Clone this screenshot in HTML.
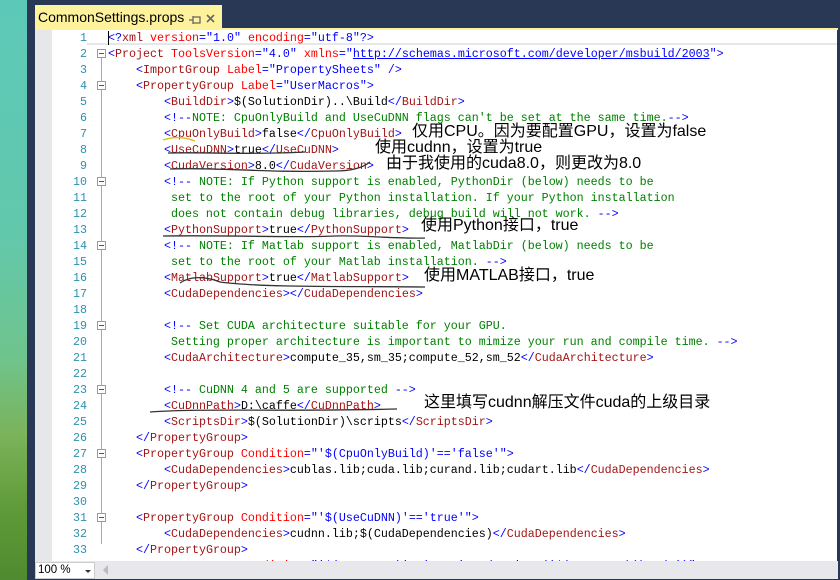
<!DOCTYPE html>
<html><head><meta charset="utf-8">
<style>
*{margin:0;padding:0;box-sizing:border-box}
body{width:840px;height:580px;overflow:hidden;background:#293955;position:relative;font-family:"Liberation Sans","Noto Sans CJK SC",sans-serif}
#desk{position:absolute;left:0;top:0;width:27px;height:580px;background:linear-gradient(180deg,#5cc9b8 0%,#62c8ac 40%,#6fc48c 62%,#7ab35a 75%,#5f9a38 88%,#4f8a30 100%)}
#tab{position:absolute;left:35px;top:5px;width:187px;height:24px;background:#fff29d;font-size:14px;color:#000;padding:4px 0 0 3px}
#tab svg{position:absolute;left:0;top:0}
#ybar{position:absolute;left:35px;top:28px;width:803px;height:2px;background:#fff29d}
#ed{position:absolute;left:35px;top:30px;width:802px;height:531px;background:#fff;overflow:hidden}
#gut{position:absolute;left:0;top:0;width:17px;height:100%;background:#e6e7e8}
.ln{position:absolute;left:17px;width:35px;text-align:right;color:#2b91af;font-family:"Liberation Mono",monospace;font-size:11.67px;line-height:16px;height:16px}
.cd{position:absolute;left:73px;white-space:pre;font-family:"Liberation Mono",monospace;font-size:11.67px;line-height:16px;height:16px;color:#000}
.b{color:#0000ff}.m{color:#a31515}.r{color:#ff0000}.g{color:#008000}.u{text-decoration:underline;color:#0000ff}
.fb{position:absolute;left:62px;width:9px;height:9px;border:1px solid #999;background:#fff}
.fb:after{content:"";position:absolute;left:1px;top:3px;width:5px;height:1px;background:#555}
.vl{position:absolute;left:66px;width:1px;background:#aaa}
.ann{position:absolute;font-size:16px;line-height:20px;color:#000;white-space:nowrap;font-family:"Liberation Sans","Noto Sans CJK SC",sans-serif}
#bot{position:absolute;left:35px;top:561px;width:803px;height:18px;background:#e8e8ec}
#zoom{position:absolute;left:0;top:1px;width:60px;height:17px;background:#fff;border:1px solid #ccc;font-size:11.5px;padding:1px 0 0 2px}
#zoom:after{content:"";position:absolute;right:3px;top:7px;border:3px solid transparent;border-top:3px solid #333}
#larr{position:absolute;left:68px;top:4px;border:5px solid transparent;border-right:5px solid #bbb;border-left:0}
#cur{position:absolute;left:73px;top:1px;width:1px;height:14px;background:#000}
#hl{position:absolute;left:52px;top:0;width:750px;height:15px;border-bottom:2px solid #e6e7e8}
</style></head><body>
<div id="desk"></div>
<div id="tab">CommonSettings.props<svg width="187" height="24" fill="none" stroke="#666" stroke-width="1.3"><path d="M154 15h4M158 11v8M158 12h7v6h-7"/><path d="M172 10l7 7M179 10l-7 7" stroke-width="1.6"/></svg></div>
<div id="ybar"></div>
<div id="ed">
<div id="gut"></div>
<div id="hl"></div>
<div id="cur"></div>
<div class="vl" style="top:24px;height:490px"></div>
<div class="fb" style="top:19px"></div>
<div class="fb" style="top:51px"></div>
<div class="fb" style="top:147px"></div>
<div class="fb" style="top:211px"></div>
<div class="fb" style="top:291px"></div>
<div class="fb" style="top:355px"></div>
<div class="fb" style="top:419px"></div>
<div class="fb" style="top:483px"></div>

<div class="ln" style="top:0">1</div><div class="cd" style="top:0"><span class="b">&lt;?</span><span class="m">xml</span> <span class="r">version</span><span class="b">="1.0"</span> <span class="r">encoding</span><span class="b">="utf-8"?&gt;</span></div>
<div class="ln" style="top:16px">2</div><div class="cd" style="top:16px"><span class="b">&lt;</span><span class="m">Project</span> <span class="r">ToolsVersion</span><span class="b">="4.0"</span> <span class="r">xmlns</span><span class="b">="</span><span class="u">http://schemas.microsoft.com/developer/msbuild/2003</span><span class="b">"&gt;</span></div>
<div class="ln" style="top:32px">3</div><div class="cd" style="top:32px">    <span class="b">&lt;</span><span class="m">ImportGroup</span> <span class="r">Label</span><span class="b">="PropertySheets" /&gt;</span></div>
<div class="ln" style="top:48px">4</div><div class="cd" style="top:48px">    <span class="b">&lt;</span><span class="m">PropertyGroup</span> <span class="r">Label</span><span class="b">="UserMacros"&gt;</span></div>
<div class="ln" style="top:64px">5</div><div class="cd" style="top:64px">        <span class="b">&lt;</span><span class="m">BuildDir</span><span class="b">&gt;</span>$(SolutionDir)..\Build<span class="b">&lt;/</span><span class="m">BuildDir</span><span class="b">&gt;</span></div>
<div class="ln" style="top:80px">6</div><div class="cd" style="top:80px">        <span class="b">&lt;!--</span><span class="g">NOTE: CpuOnlyBuild and UseCuDNN flags can't be set at the same time.</span><span class="b">--&gt;</span></div>
<div class="ln" style="top:96px">7</div><div class="cd" style="top:96px">        <span class="b">&lt;</span><span class="m">CpuOnlyBuild</span><span class="b">&gt;</span>false<span class="b">&lt;/</span><span class="m">CpuOnlyBuild</span><span class="b">&gt;</span></div>
<div class="ln" style="top:112px">8</div><div class="cd" style="top:112px">        <span class="b">&lt;</span><span class="m">UseCuDNN</span><span class="b">&gt;</span>true<span class="b">&lt;/</span><span class="m">UseCuDNN</span><span class="b">&gt;</span></div>
<div class="ln" style="top:128px">9</div><div class="cd" style="top:128px">        <span class="b">&lt;</span><span class="m">CudaVersion</span><span class="b">&gt;</span>8.0<span class="b">&lt;/</span><span class="m">CudaVersion</span><span class="b">&gt;</span></div>
<div class="ln" style="top:144px">10</div><div class="cd" style="top:144px">        <span class="b">&lt;!--</span><span class="g"> NOTE: If Python support is enabled, PythonDir (below) needs to be</span></div>
<div class="ln" style="top:160px">11</div><div class="cd g" style="top:160px">         set to the root of your Python installation. If your Python installation</div>
<div class="ln" style="top:176px">12</div><div class="cd" style="top:176px"><span class="g">         does not contain debug libraries, debug build will not work. </span><span class="b">--&gt;</span></div>
<div class="ln" style="top:192px">13</div><div class="cd" style="top:192px">        <span class="b">&lt;</span><span class="m">PythonSupport</span><span class="b">&gt;</span>true<span class="b">&lt;/</span><span class="m">PythonSupport</span><span class="b">&gt;</span></div>
<div class="ln" style="top:208px">14</div><div class="cd" style="top:208px">        <span class="b">&lt;!--</span><span class="g"> NOTE: If Matlab support is enabled, MatlabDir (below) needs to be</span></div>
<div class="ln" style="top:224px">15</div><div class="cd" style="top:224px"><span class="g">         set to the root of your Matlab installation. </span><span class="b">--&gt;</span></div>
<div class="ln" style="top:240px">16</div><div class="cd" style="top:240px">        <span class="b">&lt;</span><span class="m">MatlabSupport</span><span class="b">&gt;</span>true<span class="b">&lt;/</span><span class="m">MatlabSupport</span><span class="b">&gt;</span></div>
<div class="ln" style="top:256px">17</div><div class="cd" style="top:256px">        <span class="b">&lt;</span><span class="m">CudaDependencies</span><span class="b">&gt;&lt;/</span><span class="m">CudaDependencies</span><span class="b">&gt;</span></div>
<div class="ln" style="top:272px">18</div>
<div class="ln" style="top:288px">19</div><div class="cd" style="top:288px">        <span class="b">&lt;!--</span><span class="g"> Set CUDA architecture suitable for your GPU.</span></div>
<div class="ln" style="top:304px">20</div><div class="cd" style="top:304px"><span class="g">         Setting proper architecture is important to mimize your run and compile time. </span><span class="b">--&gt;</span></div>
<div class="ln" style="top:320px">21</div><div class="cd" style="top:320px">        <span class="b">&lt;</span><span class="m">CudaArchitecture</span><span class="b">&gt;</span>compute_35,sm_35;compute_52,sm_52<span class="b">&lt;/</span><span class="m">CudaArchitecture</span><span class="b">&gt;</span></div>
<div class="ln" style="top:336px">22</div>
<div class="ln" style="top:352px">23</div><div class="cd" style="top:352px">        <span class="b">&lt;!--</span><span class="g"> CuDNN 4 and 5 are supported </span><span class="b">--&gt;</span></div>
<div class="ln" style="top:368px">24</div><div class="cd" style="top:368px">        <span class="b">&lt;</span><span class="m">CuDnnPath</span><span class="b">&gt;</span>D:\caffe<span class="b">&lt;/</span><span class="m">CuDnnPath</span><span class="b">&gt;</span></div>
<div class="ln" style="top:384px">25</div><div class="cd" style="top:384px">        <span class="b">&lt;</span><span class="m">ScriptsDir</span><span class="b">&gt;</span>$(SolutionDir)\scripts<span class="b">&lt;/</span><span class="m">ScriptsDir</span><span class="b">&gt;</span></div>
<div class="ln" style="top:400px">26</div><div class="cd" style="top:400px">    <span class="b">&lt;/</span><span class="m">PropertyGroup</span><span class="b">&gt;</span></div>
<div class="ln" style="top:416px">27</div><div class="cd" style="top:416px">    <span class="b">&lt;</span><span class="m">PropertyGroup</span> <span class="r">Condition</span><span class="b">="'$(CpuOnlyBuild)'=='false'"&gt;</span></div>
<div class="ln" style="top:432px">28</div><div class="cd" style="top:432px">        <span class="b">&lt;</span><span class="m">CudaDependencies</span><span class="b">&gt;</span>cublas.lib;cuda.lib;curand.lib;cudart.lib<span class="b">&lt;/</span><span class="m">CudaDependencies</span><span class="b">&gt;</span></div>
<div class="ln" style="top:448px">29</div><div class="cd" style="top:448px">    <span class="b">&lt;/</span><span class="m">PropertyGroup</span><span class="b">&gt;</span></div>
<div class="ln" style="top:464px">30</div>
<div class="ln" style="top:480px">31</div><div class="cd" style="top:480px">    <span class="b">&lt;</span><span class="m">PropertyGroup</span> <span class="r">Condition</span><span class="b">="'$(UseCuDNN)'=='true'"&gt;</span></div>
<div class="ln" style="top:496px">32</div><div class="cd" style="top:496px">        <span class="b">&lt;</span><span class="m">CudaDependencies</span><span class="b">&gt;</span>cudnn.lib;$(CudaDependencies)<span class="b">&lt;/</span><span class="m">CudaDependencies</span><span class="b">&gt;</span></div>
<div class="ln" style="top:512px">33</div><div class="cd" style="top:512px">    <span class="b">&lt;/</span><span class="m">PropertyGroup</span><span class="b">&gt;</span></div>
<div class="ln" style="top:528px">34</div><div class="cd" style="top:528px">    <span class="b">&lt;</span><span class="m">PropertyGroup</span> <span class="r">Condition</span><span class="b">="'$(UseCuDNN)'=='true' And Exists('$(CuDnnPath)\cuda')"&gt;</span></div>

<svg style="position:absolute;left:0;top:0" width="802" height="531" fill="none" stroke="#333" stroke-width="1.3">
<path d="M128 110 C140 106 150 107 160 111" stroke="#d8c020"/>
<path d="M133 123 C170 122 220 125 270 122"/>
<path d="M135 139 C180 137 230 143 300 141 C320 141 330 136 335 132"/>
<path d="M128 206 C200 205 260 208 300 206 C330 205 360 209 390 208"/>
<path d="M145 253 C155 246 170 246 185 252 C230 258 320 256 390 257"/>
<path d="M115 382 C170 378 240 382 362 379"/>
</svg>
</div>
<div class="ann" style="left:412px;top:122px">仅用CPU。因为要配置GPU，设置为false</div>
<div class="ann" style="left:375px;top:138px">使用cudnn，设置为true</div>
<div class="ann" style="left:386px;top:154px">由于我使用的cuda8.0，则更改为8.0</div>
<div class="ann" style="left:421px;top:216px">使用Python接口，true</div>
<div class="ann" style="left:424px;top:266px">使用MATLAB接口，true</div>
<div class="ann" style="left:424px;top:393px">这里填写cudnn解压文件cuda的上级目录</div>
<div id="bot"><div id="zoom">100 %</div><div id="larr"></div></div>
</body></html>
